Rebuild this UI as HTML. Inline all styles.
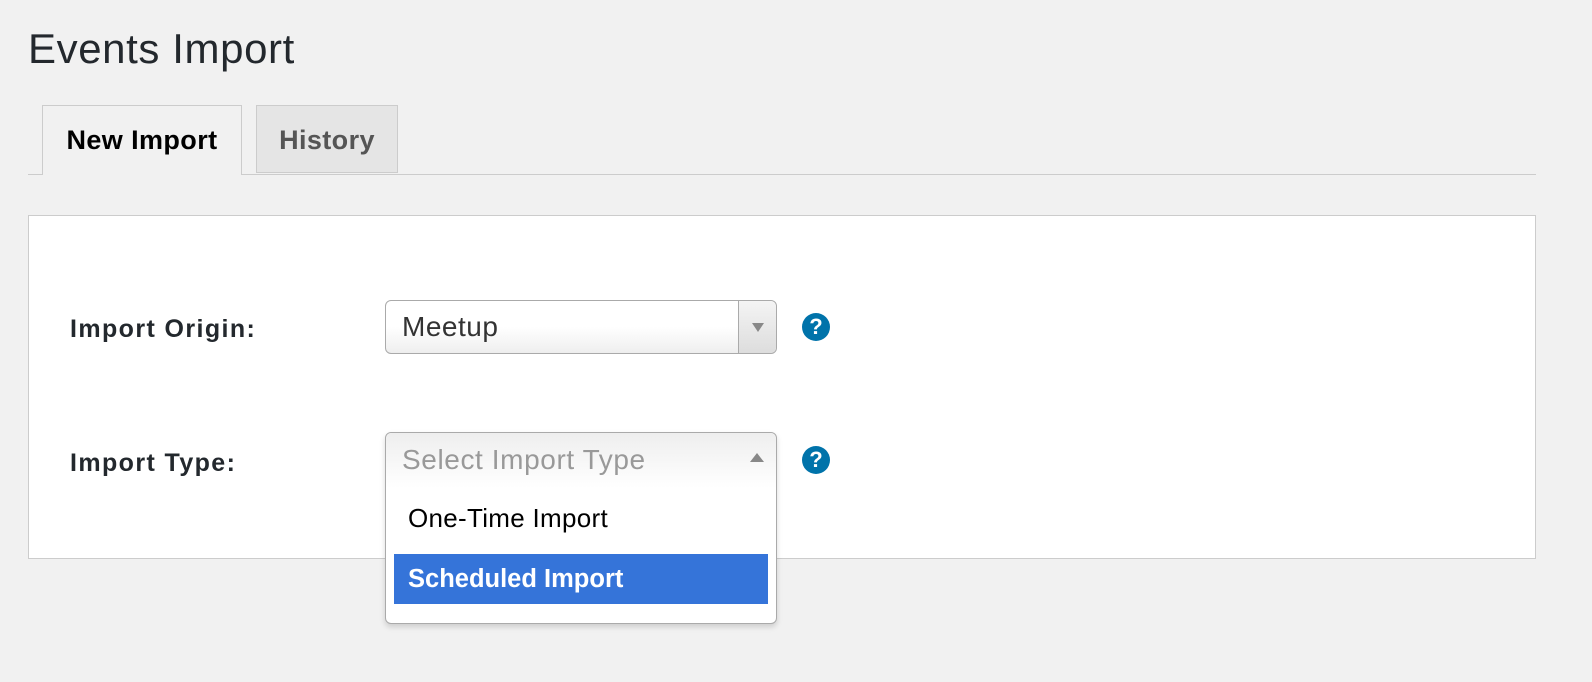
<!DOCTYPE html>
<html><head><style>
body{margin:0;width:1592px;height:682px;background:#f1f1f1;font-family:"Liberation Sans",sans-serif;position:relative;overflow:hidden}
.a{position:absolute}
h1{position:absolute;left:28px;top:25px;margin:0;font-weight:400;font-size:42px;letter-spacing:0.6px;color:#23282d}
.tab{position:absolute;top:105px;height:68px;border:1px solid #ccc;box-sizing:border-box;font-weight:bold;font-size:27px;letter-spacing:0.4px;line-height:68px;text-align:center}
.lbl{position:absolute;left:70px;font-weight:bold;font-size:25px;letter-spacing:1.4px;color:#23282d}
.help{position:absolute;width:28px;height:28px;border-radius:50%;background:#0073aa;color:#fff;font-weight:bold;font-size:22px;line-height:28px;text-align:center}
</style></head><body>
<h1>Events Import</h1>
<div class="a" style="left:28px;top:174px;width:1508px;height:1px;background:#ccc"></div>
<div class="tab" style="left:42px;width:200px;height:70px;background:#f1f1f1;border-bottom:none;color:#000">New Import</div>
<div class="tab" style="left:256px;width:142px;background:#e5e5e5;color:#555">History</div>
<div class="a" style="left:28px;top:215px;width:1508px;height:344px;box-sizing:border-box;background:#fff;border:1px solid #ccc"></div>
<div class="lbl" style="top:315px">Import Origin:</div>
<div class="lbl" style="top:449px">Import Type:</div>
<div class="a" style="left:385px;top:300px;width:392px;height:54px;box-sizing:border-box;border:1px solid #aaa;border-radius:6px;background:linear-gradient(#fff 50%,#eee);font-size:28px;letter-spacing:0.5px;color:#333;line-height:52px;padding-left:16px">Meetup
<div class="a" style="right:0;top:0;width:37px;height:52px;border-left:1px solid #aaa;background:linear-gradient(#f4f4f4,#ddd);border-radius:0 6px 6px 0"></div>
<div class="a" style="right:12px;top:22px;width:0;height:0;border-left:6px solid transparent;border-right:6px solid transparent;border-top:9px solid #888"></div>
</div>
<div class="help" style="left:802px;top:313px">?</div>
<div class="a" style="left:385px;top:432px;width:392px;height:192px;box-sizing:border-box;border:1px solid #aaa;border-radius:6px;background:#fff;box-shadow:0 3px 6px rgba(0,0,0,.15)">
<div class="a" style="left:0;top:0;width:390px;height:55px;background:linear-gradient(#eee,#fff);border-radius:6px 6px 0 0;font-size:28px;letter-spacing:0.6px;color:#999;line-height:54px;padding-left:16px;box-sizing:border-box">Select Import Type</div>
<div class="a" style="right:12px;top:20px;width:0;height:0;border-left:7px solid transparent;border-right:7px solid transparent;border-bottom:9px solid #888"></div>
<div class="a" style="left:22px;top:70px;font-size:26px;letter-spacing:0.3px;color:#000">One-Time Import</div>
<div class="a" style="left:8px;top:121px;width:374px;height:50px;background:#3574d9;color:#fff;font-size:25.5px;font-weight:bold;line-height:50px;padding-left:14px;box-sizing:border-box">Scheduled Import</div>
</div>
<div class="help" style="left:802px;top:446px">?</div>
</body></html>
